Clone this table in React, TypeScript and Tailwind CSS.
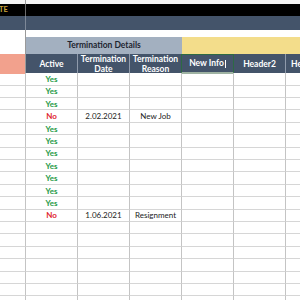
import React from "react"

const cols = "grid grid-cols-[26px_52px_52px_52px_52px_52px_52px]"

type Row = { active?: "Yes" | "No"; date?: string; reason?: string }

const rows: Row[] = [
  { active: "Yes" },
  { active: "Yes" },
  { active: "Yes" },
  { active: "No", date: "2.02.2021", reason: "New Job" },
  { active: "Yes" },
  { active: "Yes" },
  { active: "Yes" },
  { active: "Yes" },
  { active: "Yes" },
  { active: "Yes" },
  { active: "Yes" },
  { active: "No", date: "1.06.2021", reason: "Resignment" },
  {}, {}, {}, {}, {}, {}, {},
]

function Cell({ children, className = "" }: { children?: React.ReactNode; className?: string }) {
  return (
    <div className={`flex items-center justify-center border-r border-b border-r-[#c4c4c4] border-b-[#d6d6d6] overflow-hidden whitespace-nowrap ${className}`}>
      {children}
    </div>
  )
}

export default function App() {
  return (
    <div className="w-[300px] h-[300px] overflow-hidden bg-white font-['Lato','Liberation_Sans',sans-serif] text-[8px] leading-none text-[#222]">
      {/* top strip */}
      <div className={`${cols} h-[4px] bg-[#f4f4f4]`}>
        <div className="border-r border-r-[#9a9a9a]" />
      </div>

      {/* title bar */}
      <div className={`${cols} h-[12px] bg-black`}>
        <div className="flex items-center border-r border-r-[#6a6a6a] text-[#c9a43a] font-bold text-[7.5px] -ml-[1px]">TE</div>
      </div>

      {/* slate bar */}
      <div className={`${cols} h-[14px] bg-[#44546a]`}>
        <div className="border-r border-r-[#7d8898]" />
      </div>

      {/* spacer row */}
      <div className={`${cols} h-[7px] bg-white`}>
        <div className="border-r border-r-[#9a9a9a]" />
      </div>

      {/* section headers */}
      <div className={`${cols} h-[17px]`}>
        <div className="border-r border-r-[#9a9a9a] bg-white" />
        <div className="col-span-3 flex items-center justify-center bg-[#a3b0c0] font-bold text-[#1e2530] text-[8.5px]">
          Termination Details
        </div>
        <div className="col-span-3 bg-[#f3dd8b]" />
      </div>

      {/* column headers */}
      <div className={`${cols} h-[19.3px] bg-[#44546a] text-white font-bold text-[8.5px]`}>
        <div className="bg-[#f2a18d] border-r border-r-[#9a9a9a]" />
        <div className="flex items-center justify-center border-r border-r-[#8f9aab]">Active</div>
        <div className="flex items-center justify-center text-center leading-[10px] border-r border-r-[#8f9aab]">
          Termination<br />Date
        </div>
        <div className="flex items-center justify-center text-center leading-[10px] border-r border-r-[#8f9aab]">
          Termination<br />Reason
        </div>
        <div className="flex items-center justify-center border border-[#2d6a44] border-b-2 border-b-[#9fb3a3] -ml-[1px]">
          New Info<span className="ml-[1px] h-[8px] border-r border-r-white" />
        </div>
        <div className="flex items-center justify-center border-r border-r-[#8f9aab]">Header2</div>
        <div className="flex items-center pl-[5px] whitespace-nowrap">Header3</div>
      </div>

      {/* data rows */}
      {rows.map((r, i) => (
        <div key={i} className={`${cols} h-[12.4px]`}>
          <Cell className="border-r-[#9a9a9a]" />
          <Cell className={`font-bold ${r.active === "No" ? "text-[#e0242b]" : "text-[#1f9a47]"}`}>{r.active}</Cell>
          <Cell>{r.date}</Cell>
          <Cell>{r.reason}</Cell>
          <Cell />
          <Cell />
          <Cell />
        </div>
      ))}
    </div>
  )
}
